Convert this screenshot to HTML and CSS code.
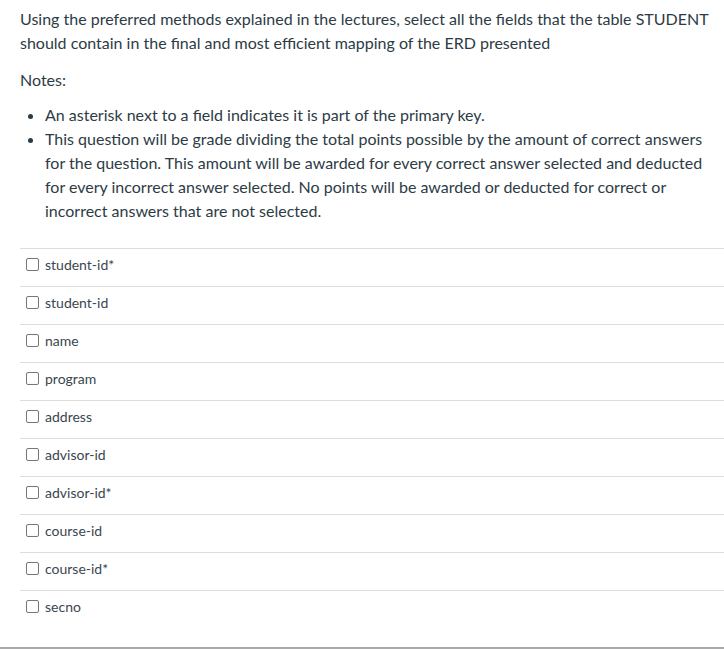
FILE: index.html
```html
<!DOCTYPE html>
<html>
<head>
<meta charset="utf-8">
<link rel="stylesheet" href="styles.css">
</head>
<body>
<div class="question">
  <div class="text">
    <p>Using the preferred methods explained in the lectures, select all the fields that the table STUDENT should contain in the final and most efficient mapping of the ERD presented</p>
    <p class="notes">Notes:</p>
    <ul>
      <li>An asterisk next to a field indicates it is part of the primary key.</li>
      <li>This question will be grade dividing the total points possible by the amount of correct answers for the question. This amount will be awarded for every correct answer selected and deducted for every incorrect answer selected. No points will be awarded or deducted for correct or incorrect answers that are not selected.</li>
    </ul>
  </div>
  <div class="answers">
    <label class="answer"><span class="box"></span>student-id*</label>
    <label class="answer"><span class="box"></span>student-id</label>
    <label class="answer"><span class="box"></span>name</label>
    <label class="answer"><span class="box"></span>program</label>
    <label class="answer"><span class="box"></span>address</label>
    <label class="answer"><span class="box"></span>advisor-id</label>
    <label class="answer"><span class="box"></span>advisor-id*</label>
    <label class="answer"><span class="box"></span>course-id</label>
    <label class="answer"><span class="box"></span>course-id*</label>
    <label class="answer"><span class="box"></span>secno</label>
  </div>
</div>
<div class="footer-line"></div>
</body>
</html>
```

FILE: styles.css
```css
html, body {
  margin: 0;
  padding: 0;
  background: #fff;
}
body {
  font-family: Lato, "Liberation Sans", sans-serif;
  color: #2d3b45;
  width: 724px;
  height: 649px;
  overflow: hidden;
}
.question {
  padding: 7px 0 0 20px;
  height: 647px;
  box-sizing: border-box;
}
.text {
  font-size: 16px;
  line-height: 24px;
}
.text p {
  margin: 0 0 13px 0;
}
.text p.notes {
  margin-bottom: 11px;
}
.text ul {
  margin: 0;
  padding-left: 25px;
}
.answers {
  margin-top: 25px;
}
.answer {
  display: flex;
  align-items: center;
  border-top: 1px solid #dddddd;
  font-size: 14px;
  color: #3a4650;
  padding-bottom: 6px;
  box-sizing: border-box;
  height: 38px;
}
.box {
  width: 11px;
  height: 11px;
  border: 1px solid #767676;
  border-radius: 2px;
  margin: 0 6px 0 6px;
  flex: none;
}
.footer-line {
  height: 2px;
  background: #aaaaaa;
}
```
